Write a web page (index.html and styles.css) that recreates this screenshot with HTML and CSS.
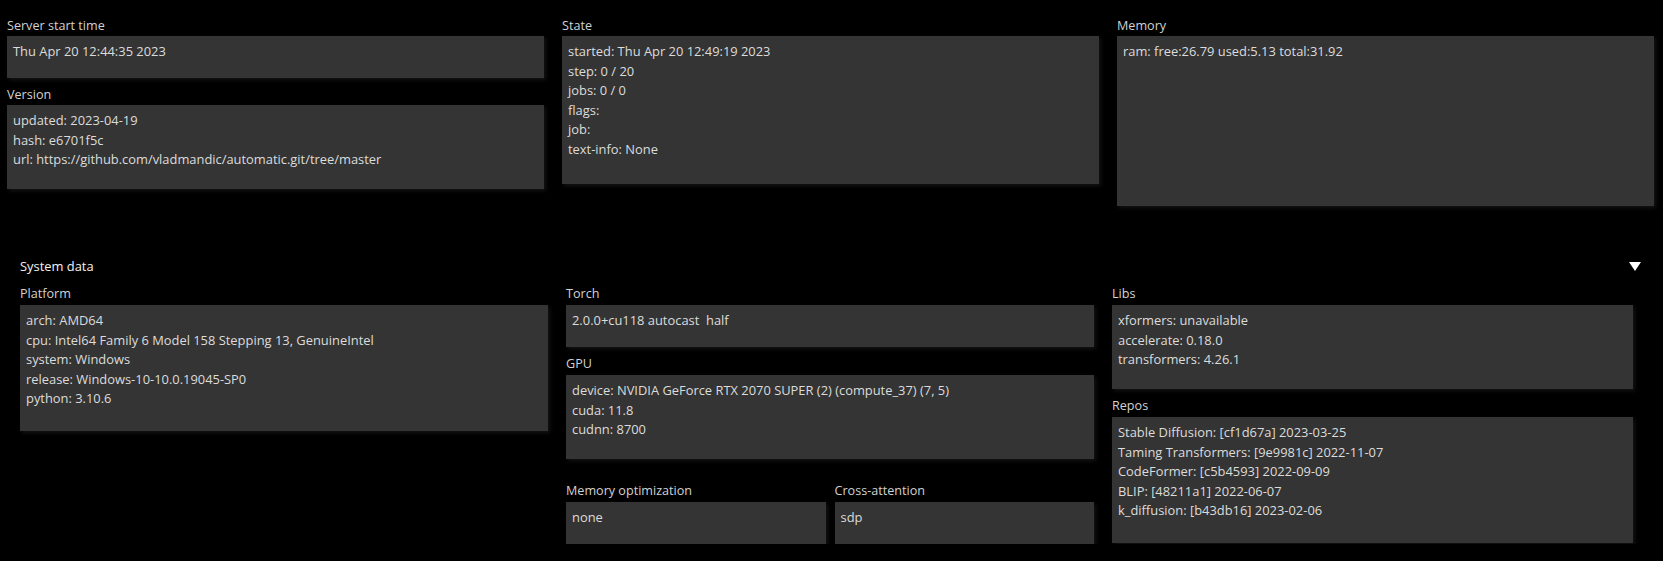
FILE: index.html
```html
<!DOCTYPE html>
<html lang="en">
<head>
    <meta charset="UTF-8">
    <meta name="viewport" content="width=device-width, initial-scale=1.0">
    <title>System Info</title>
    <link rel="stylesheet" href="styles.css">
</head>
<body>
    <div class="top-row">
        <div class="column">
            <div class="field">
                <label>Server start time</label>
                <div class="box rows-1">Thu Apr 20 12:44:35 2023</div>
            </div>
            <div class="field">
                <label>Version</label>
                <div class="box rows-3">
                    <div>updated: 2023-04-19</div>
                    <div>hash: e6701f5c</div>
                    <div>url: https://github.com/vladmandic/automatic.git/tree/master</div>
                </div>
            </div>
        </div>
        <div class="column">
            <div class="field">
                <label>State</label>
                <div class="box rows-6">
                    <div>started: Thu Apr 20 12:49:19 2023</div>
                    <div>step: 0 / 20</div>
                    <div>jobs: 0 / 0</div>
                    <div>flags:</div>
                    <div>job:</div>
                    <div>text-info: None</div>
                </div>
            </div>
        </div>
        <div class="column">
            <div class="field">
                <label>Memory</label>
                <div class="box tall">ram: free:26.79 used:5.13 total:31.92</div>
            </div>
        </div>
    </div>

    <div class="accordion">
        <div class="accordion-head">
            <span>System data</span>
            <span class="arrow"></span>
        </div>
        <div class="accordion-body">
            <div class="column">
                <div class="field">
                    <label>Platform</label>
                    <div class="box rows-5">
                        <div>arch: AMD64</div>
                        <div>cpu: Intel64 Family 6 Model 158 Stepping 13, GenuineIntel</div>
                        <div>system: Windows</div>
                        <div>release: Windows-10-10.0.19045-SP0</div>
                        <div>python: 3.10.6</div>
                    </div>
                </div>
            </div>
            <div class="column">
                <div class="field">
                    <label>Torch</label>
                    <div class="box rows-1">2.0.0+cu118 autocast&nbsp; half</div>
                </div>
                <div class="field">
                    <label>GPU</label>
                    <div class="box rows-3">
                        <div>device: NVIDIA GeForce RTX 2070 SUPER (2) (compute_37) (7, 5)</div>
                        <div>cuda: 11.8</div>
                        <div>cudnn: 8700</div>
                    </div>
                </div>
                <div class="pair">
                    <div class="field">
                        <label>Memory optimization</label>
                        <div class="box rows-1">none</div>
                    </div>
                    <div class="field">
                        <label>Cross-attention</label>
                        <div class="box rows-1">sdp</div>
                    </div>
                </div>
            </div>
            <div class="column narrow">
                <div class="field">
                    <label>Libs</label>
                    <div class="box rows-3">
                        <div>xformers: unavailable</div>
                        <div>accelerate: 0.18.0</div>
                        <div>transformers: 4.26.1</div>
                    </div>
                </div>
                <div class="field">
                    <label>Repos</label>
                    <div class="box rows-5">
                        <div>Stable Diffusion: [cf1d67a] 2023-03-25</div>
                        <div>Taming Transformers: [9e9981c] 2022-11-07</div>
                        <div>CodeFormer: [c5b4593] 2022-09-09</div>
                        <div>BLIP: [48211a1] 2022-06-07</div>
                        <div>k_diffusion: [b43db16] 2023-02-06</div>
                    </div>
                </div>
            </div>
        </div>
    </div>
</body>
</html>
```

FILE: styles.css
```css
body {
    margin: 0;
    background: #000;
    color: #dcdcdc;
    font-family: "Open Sans", "Noto Sans", sans-serif;
    font-size: 12.9px;
}
.top-row {
    display: grid;
    grid-template-columns: repeat(3, 1fr);
    gap: 18px;
    padding: 16px 9px 0 7px;
}
.column {
    display: flex;
    flex-direction: column;
    gap: 7px;
}
.field label {
    display: block;
    height: 20px;
    line-height: 20px;
    font-size: 12.6px;
    color: #d2d2d2;
}
.box {
    box-sizing: border-box;
    background: #343434;
    padding: 6px 6px;
    line-height: 19.5px;
    box-shadow: 2px 2px 4px #141414;
    white-space: nowrap;
}
.rows-1 {
    height: 42px;
}
.rows-3 {
    height: 84px;
}
.rows-5 {
    height: 126px;
}
.rows-6 {
    height: 148px;
}
.tall {
    height: 170px;
}
.accordion {
    margin: 50px 9px 0 7px;
    padding: 0 13px;
}
.accordion-head {
    display: flex;
    justify-content: space-between;
    align-items: center;
    height: 20px;
    color: #f2f2f2;
    margin-bottom: 8px;
}
.accordion-body .field label {
    margin-bottom: 1px;
}
.arrow {
    width: 0;
    height: 0;
    border-left: 6px solid transparent;
    border-right: 6px solid transparent;
    border-top: 9px solid #fff;
}
.accordion-body {
    display: grid;
    grid-template-columns: 528px 528px 1fr;
    gap: 18px;
}
.column.narrow {
    margin-right: 8px;
}
.pair {
    display: grid;
    grid-template-columns: 1fr 1fr;
    gap: 9px;
    margin-top: 15px;
}
```
